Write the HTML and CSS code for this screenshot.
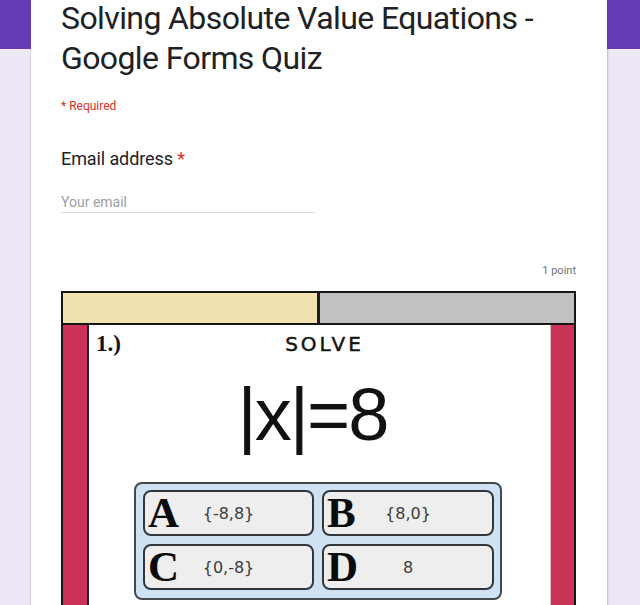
FILE: index.html
```html
<!DOCTYPE html>
<html>
<head>
<meta charset="utf-8">
<link rel="stylesheet" href="styles.css">
</head>
<body>
<div class="card">
  <h1 class="title">Solving Absolute Value Equations - Google Forms Quiz</h1>
  <div class="required">* Required</div>
  <div class="question">Email address <span class="star">*</span></div>
  <div class="input">Your email</div>
  <div class="points">1 point</div>
  <div class="quiz">
    <div class="topbar">
      <div class="beige"></div>
      <div class="divider"></div>
      <div class="gray"></div>
    </div>
    <div class="body">
      <div class="side left"></div>
      <div class="panel">
        <div class="headrow">
          <span class="num">1.)</span>
          <span class="solve">SOLVE</span>
          <span></span>
        </div>
        <div class="eq">|x|=8</div>
        <div class="answers">
          <div class="opt"><span class="letter">A</span><span class="val">{-8,8}</span></div>
          <div class="opt"><span class="letter">B</span><span class="val">{8,0}</span></div>
          <div class="opt"><span class="letter">C</span><span class="val">{0,-8}</span></div>
          <div class="opt"><span class="letter">D</span><span class="val">8</span></div>
        </div>
      </div>
      <div class="side right"></div>
    </div>
  </div>
</div>
</body>
</html>
```
FILE: styles.css
```css
html, body {
  margin: 0;
  padding: 0;
  height: 605px;
  overflow: hidden;
}
body {
  background: linear-gradient(#673ab7 0, #673ab7 49px, #ede7f6 49px);
  font-family: Roboto, "Liberation Sans", sans-serif;
}
.card {
  margin-left: 31px;
  width: 576px;
  box-sizing: border-box;
  padding: 0 31px 0 30px;
  background: #fff;
  box-shadow: 0 1px 2px rgba(60,64,67,0.3), 1px 0 2px rgba(60,64,67,0.15);
  height: 700px;
}
.title {
  margin: -2px 0 0 0;
  font-size: 32px;
  line-height: 40px;
  font-weight: 400;
  letter-spacing: -0.6px;
  color: #202124;
}
.required {
  margin-top: 20px;
  font-size: 12px;
  line-height: 16px;
  color: #d93025;
}
.question {
  margin-top: 33px;
  font-size: 18px;
  line-height: 24px;
  letter-spacing: -0.1px;
  color: #202124;
}
.star { color: #d93025; }
.input {
  margin-top: 21px;
  width: 254px;
  font-size: 14px;
  line-height: 20px;
  color: #9aa0a6;
  border-bottom: 1px solid #dadce0;
  padding-bottom: 0;
}
.points {
  margin-top: 50px;
  text-align: right;
  font-size: 11px;
  line-height: 16px;
  color: #70757a;
}
.quiz {
  margin-top: 12px;
  width: 515px;
  box-sizing: border-box;
  border: 2px solid #161616;
  border-bottom: none;
  height: 330px;
  display: flex;
  flex-direction: column;
}
.topbar {
  display: flex;
  height: 30px;
  border-bottom: 2px solid #161616;
}
.beige { width: 254px; background: #f0e2af; }
.divider { width: 3px; background: #1d1d1d; }
.gray { flex: 1; background: #c1c1c1; }
.body {
  flex: 1;
  display: flex;
}
.side { background: #cc3359; }
.side.left { width: 24px; border-right: 2px solid #2a2028; }
.side.right { width: 23px; border-left: 1px solid #e6b8c4; }
.panel {
  flex: 1;
  background: #fff;
  display: flex;
  flex-direction: column;
}
.headrow {
  display: grid;
  grid-template-columns: 1fr auto 1fr;
  align-items: start;
  padding: 6px 0 0 7px;
  height: 28px;
}
.num {
  font-family: "Liberation Serif", serif;
  font-weight: 700;
  font-size: 23px;
  line-height: 26px;
  color: #111;
}
.solve {
  font-family: "DejaVu Sans", sans-serif;
  font-weight: 400;
  font-size: 20px;
  line-height: 26px;
  letter-spacing: 3px;
  margin-right: -3px;
  -webkit-text-stroke: 0.5px #151515;
  color: #151515;
}
.eq {
  text-align: center;
  font-family: "Liberation Sans", sans-serif;
  font-size: 74px;
  line-height: 90px;
  letter-spacing: -2px;
  color: #111;
  margin-top: 11px;
  padding-right: 14px;
}
.answers {
  margin: 22px 0 0 45px;
  width: 368px;
  box-sizing: border-box;
  background: #cfe2f3;
  border: 2px solid #45484c;
  border-radius: 8px;
  padding: 6px 6px 8px 7px;
  display: grid;
  grid-template-columns: 171px 172px;
  grid-auto-rows: 46px;
  gap: 8px;
}
.opt {
  display: grid;
  align-items: center;
  background: #eeeeee;
  border: 2px solid #33363a;
  border-radius: 8px;
}
.letter, .val { grid-area: 1 / 1; }
.letter {
  justify-self: start;
  padding-left: 3px;
  font-family: "Liberation Serif", serif;
  font-weight: 700;
  font-size: 43px;
  line-height: 42px;
  color: #0b0b0b;
}
.val {
  justify-self: center;
  font-family: "DejaVu Sans", sans-serif;
  font-size: 16px;
  color: #3c3c3c;
}
```
